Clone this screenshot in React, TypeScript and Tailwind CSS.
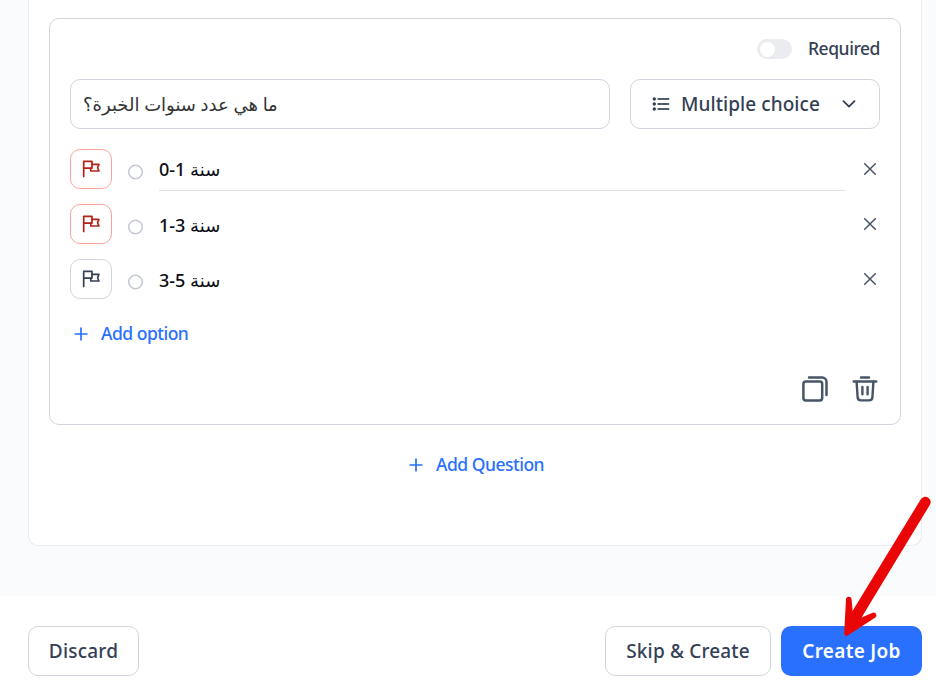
import { useState } from "react";

const FONT = "font-['Noto_Sans','DejaVu_Sans',sans-serif]";

interface Option {
  id: number;
  label: string;
  flagged: boolean;
}

const initialOptions: Option[] = [
  { id: 1, label: "0-1 سنة", flagged: true },
  { id: 2, label: "1-3 سنة", flagged: true },
  { id: 3, label: "3-5 سنة", flagged: false },
];

function FlagIcon() {
  return (
    <svg width="20" height="20" viewBox="0 0 20 20" fill="none" stroke="currentColor" strokeWidth="1.7" strokeLinejoin="round" strokeLinecap="round">
      <path d="M2.7 17.500V2.400h8.300v6.700H2.700" />
      <path d="M11 5.400h6.900l-1.300 3.300 1.300 3.300H9.800V9.400" />
    </svg>
  );
}

function PlusIcon() {
  return (
    <svg width="14" height="14" viewBox="0 0 14 14" fill="none" stroke="currentColor" strokeWidth="1.7">
      <path d="M7 .5v13M.5 7h13" />
    </svg>
  );
}

function CloseIcon() {
  return (
    <svg width="12" height="12" viewBox="0 0 12 12" fill="none" stroke="currentColor" strokeWidth="1.5" strokeLinecap="round">
      <path d="M.7.7l10.6 10.6M11.3.7L.7 11.3" />
    </svg>
  );
}

function ListIcon() {
  return (
    <svg width="18" height="14" viewBox="0 0 18 14" fill="none" stroke="currentColor">
      <path d="M6.200 2h10.300M6.200 7h10.300M6.200 12h10.300" strokeWidth="1.8" strokeLinecap="round" opacity=".85" />
      <g fill="currentColor" stroke="none">
        <circle cx="2.3" cy="2" r="1.7" />
        <circle cx="2.3" cy="7" r="1.7" />
        <circle cx="2.3" cy="12" r="1.7" />
      </g>
    </svg>
  );
}

function CopyIcon() {
  return (
    <svg width="26" height="26" viewBox="0 0 26 26" fill="none" stroke="currentColor" strokeWidth="2.5" strokeLinecap="round" strokeLinejoin="round">
      <rect x="1.4" y="5.6" width="18.8" height="18.8" rx="2.4" />
      <path d="M7 1.5h13.2a4.3 4.3 0 0 1 4.3 4.3V19" />
    </svg>
  );
}

function TrashIcon() {
  return (
    <svg width="26" height="26" viewBox="0 0 26 26" fill="none" stroke="currentColor" strokeWidth="2.4" strokeLinecap="round" strokeLinejoin="round">
      <path d="M9 1.5h8M1.7 5.5h22.6" />
      <path d="M4.6 5.8l1 15.4a3.4 3.4 0 0 0 3.4 3.2h8a3.4 3.4 0 0 0 3.4-3.2l1-15.4" />
      <path d="M10.4 11v7.2M15.6 11v7.2" />
    </svg>
  );
}

function OptionRow({ option, active, onRemove }: { option: Option; active: boolean; onRemove: () => void }) {
  return (
    <div className="flex h-[42px] items-start">
      <button
        className={
          option.flagged
            ? "flex h-10 w-[42px] items-center justify-center rounded-[10px] border border-[#fda29b] text-[#b42318]"
            : "flex h-10 w-[42px] items-center justify-center rounded-[10px] border border-[#d0d5dd] text-[#344054]"
        }
      >
        <FlagIcon />
      </button>
      <svg className="mt-[15px] ml-4" width="15" height="16" viewBox="0 0 15 16" fill="none" stroke="#c5c9d3" strokeWidth="1.5">
        <circle cx="7.5" cy="8" r="6.8" />
      </svg>
      <div
        className={
          active
            ? "ml-4 flex h-[42px] w-[686px] items-center border-b border-[#e0e2e5]"
            : "ml-4 flex h-[42px] w-[686px] items-center pt-px"
        }
      >
        <span className="text-[18px] font-medium tracking-[-0.2px] whitespace-nowrap text-[#0b0b14]">{option.label}</span>
      </div>
      <button className="mt-[14px] ml-[19px] text-[#475467]" onClick={onRemove}>
        <CloseIcon />
      </button>
    </div>
  );
}

export default function App() {
  const [options, setOptions] = useState<Option[]>(initialOptions);

  return (
    <div className={`relative flex h-[692px] w-[936px] flex-col overflow-hidden bg-[#fafbfd] ${FONT}`}>
      <div className="mx-7 mr-[14px] h-[546px] rounded-b-[10px] border border-t-0 border-[#e9ebef] bg-white px-5 pt-[18px]">
        <div className="h-[407px] w-[852px] rounded-[10px] border border-[#d0d5dd] px-5 pt-5">
          <div className="flex h-5 items-center justify-end">
            <span className="flex h-5 w-[35px] items-center rounded-full bg-[#ebecf0] px-[3px]">
              <span className="h-[15px] w-[15px] rounded-full bg-white" />
            </span>
            <span className="ml-4 w-[72px] pb-0.5 text-[17.5px] font-medium tracking-[-0.45px] whitespace-nowrap text-[#344054]">Required</span>
          </div>

          <div className="mt-5 flex justify-between">
            <div className="flex h-[50px] w-[540px] items-center rounded-[10px] border border-[#d0d5dd] px-3">
              <span className="text-[18px] whitespace-nowrap text-[#333]">ما هي عدد سنوات الخبرة؟</span>
            </div>
            <button className="flex h-[50px] w-[250px] items-center rounded-[10px] border border-[#d0d5dd] pl-[21px] text-[#344054]">
              <ListIcon />
              <span className="ml-[11px] w-[139px] text-left text-[19px] font-medium tracking-[0.07px] whitespace-nowrap">Multiple choice</span>
              <svg className="ml-[22px]" width="14" height="8" viewBox="0 0 14 8" fill="none" stroke="currentColor" strokeWidth="1.8" strokeLinecap="round" strokeLinejoin="round">
                <path d="M1.5 1.2L7 6.600l5.500-5.400" />
              </svg>
            </button>
          </div>

          <div className="mt-5 flex flex-col gap-[13px]">
            {options.map((option, i) => (
              <OptionRow
                key={option.id}
                option={option}
                active={i === 0}
                onRemove={() => setOptions((prev) => prev.filter((o) => o.id !== option.id))}
              />
            ))}
          </div>

          <button className="mt-[21px] ml-1 flex h-6 items-center text-[17.5px] font-medium tracking-[-0.5px] text-[#2970ff]">
            <PlusIcon />
            <span className="ml-[13px] pb-0.5">Add option</span>
          </button>

          <div className="mt-[30px] mr-0.5 flex justify-end gap-6 text-[#475467]">
            <button><CopyIcon /></button>
            <button><TrashIcon /></button>
          </div>
        </div>

        <button className="mt-7 ml-[360px] flex h-6 items-center text-[17.5px] font-medium tracking-[-0.5px] text-[#2970ff]">
          <PlusIcon />
          <span className="ml-[13px] pb-0.5">Add Question</span>
        </button>
      </div>

      <div className="mt-[50px] flex h-24 items-start bg-white pt-[30px] pr-[14px] pl-7 text-[19px] font-medium text-[#344054]">
        <button className="h-[50px] w-[111px] rounded-[10px] border border-[#d0d5dd] tracking-[0.2px]">Discard</button>
        <button className="ml-auto h-[50px] w-[166px] rounded-[10px] border border-[#d0d5dd] tracking-[0.15px] whitespace-nowrap">Skip &amp; Create</button>
        <button className="ml-[10px] h-[50px] w-[141px] rounded-[10px] bg-[#2970ff] font-semibold tracking-[0.3px] whitespace-nowrap text-white">Create Job</button>
      </div>

      {/* pointer arrow over the create button */}
      <svg className="pointer-events-none absolute top-[490px] left-[836px]" width="100" height="150" viewBox="0 0 100 150" fill="#ea0606">
        <path d="M84.700 9.400a5.300 5.300 0 0 1 9.200 5.400L34.600 112.400 20 137 13 134 16.500 121z" />
        <path d="M10 109.500a2.800 2.800 0 0 1 5.600 0L16.600 121 25.500 127.500 36.700 122.800a2.700 2.700 0 0 1 2.700 4.600L12 145.300a2.300 2.300 0 0 1-3.800-2z" />
      </svg>
    </div>
  );
}
